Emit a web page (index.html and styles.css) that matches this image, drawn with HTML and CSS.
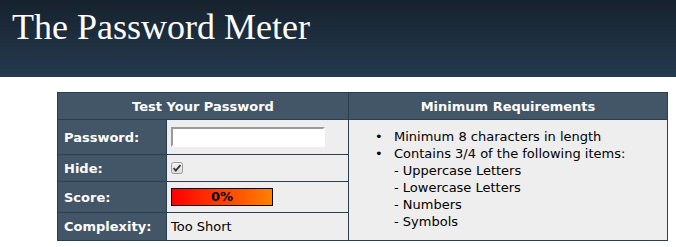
FILE: index.html
```html
<!DOCTYPE html>
<html>
<head>
<meta charset="utf-8">
<link rel="stylesheet" href="styles.css">
</head>
<body>
<div class="header">
  <h1 class="title">The Password Meter</h1>
</div>
<div class="main">
  <table class="meter">
    <colgroup>
      <col class="col-label">
      <col class="col-value">
      <col class="col-reqs">
    </colgroup>
    <tr class="row-head">
      <th class="head" colspan="2">Test Your Password</th>
      <th class="head">Minimum Requirements</th>
    </tr>
    <tr class="row-pass">
      <td class="label">Password:</td>
      <td class="value"><input class="pwd" type="password"></td>
      <td class="reqs" rowspan="4">
        <ul class="req-list">
          <li>Minimum 8 characters in length</li>
          <li>Contains 3/4 of the following items:
            <ul class="sub-list">
              <li>- Uppercase Letters</li>
              <li>- Lowercase Letters</li>
              <li>- Numbers</li>
              <li>- Symbols</li>
            </ul>
          </li>
        </ul>
      </td>
    </tr>
    <tr class="row-hide">
      <td class="label">Hide:</td>
      <td class="value"><svg class="check" width="12" height="12" viewBox="0 0 12 12"><defs><linearGradient id="cb" x1="0" y1="0" x2="0" y2="1"><stop offset="0" stop-color="#f4f4f4"/><stop offset="1" stop-color="#dcdcdc"/></linearGradient></defs><rect x="0.5" y="0.5" width="11" height="11" rx="2" fill="url(#cb)" stroke="#9a9a9a"/><path d="M2.6 6.2 L4.8 8.6 L9.4 3.2" fill="none" stroke="#333" stroke-width="1.8"/></svg></td>
    </tr>
    <tr class="row-score">
      <td class="label">Score:</td>
      <td class="value"><div class="bar">0%</div></td>
    </tr>
    <tr class="row-comp">
      <td class="label">Complexity:</td>
      <td class="value">Too Short</td>
    </tr>
  </table>
</div>
</body>
</html>
```
FILE: styles.css
```css
html, body {
  margin: 0;
  padding: 0;
  background: #ffffff;
}
body {
  font-family: "DejaVu Sans", Verdana, sans-serif;
  font-size: 13px;
  color: #000;
}
.header {
  height: 77px;
  background: linear-gradient(to bottom, #16212c 0%, #1d2d3d 45%, #253a4e 100%);
  overflow: hidden;
}
.title {
  margin: 0;
  padding: 7px 0 0 12px;
  font-family: "Liberation Serif", "Times New Roman", serif;
  font-weight: normal;
  font-size: 36px;
  line-height: 40px;
  color: #ffffff;
}
.main {
  padding: 15px 0 0 57px;
}
.meter {
  border-collapse: collapse;
  border: 1px solid #2c3e50;
  width: 610px;
  table-layout: fixed;
}
.col-label { width: 109px; }
.col-value { width: 182px; }
.col-reqs { width: 319px; }
.meter th, .meter td {
  border: 1px solid #2c3e50;
  padding: 0;
}
.head {
  background: #435668;
  color: #ffffff;
  font-weight: bold;
  text-align: center;
  height: 26px;
}
.label {
  background: #435668;
  color: #ffffff;
  font-weight: bold;
  padding-left: 6px !important;
}
.value {
  background: #eeeeee;
  padding-left: 4px !important;
}
.row-pass td.label, .row-pass td.value { height: 34px; }
.row-hide td { height: 26px; }
.row-score td { height: 30px; }
.row-comp td { height: 27px; }
.pwd {
  display: block;
  box-sizing: border-box;
  width: 154px;
  height: 20px;
  margin: 0;
  border: 2px solid #ffffff;
  border-top-color: #9a9a9a;
  border-left-color: #9a9a9a;
  background: #ffffff;
}
.check {
  display: block;
}
.bar {
  box-sizing: border-box;
  width: 102px;
  height: 18px;
  border: 1px solid #000;
  background: linear-gradient(to right, #ff0000, #ff8000);
  text-align: center;
  font-weight: bold;
  font-size: 13px;
  line-height: 16px;
}
.reqs {
  background: #eeeeee;
  vertical-align: top;
}
.req-list {
  list-style: none;
  margin: 8px 0 0 0;
  padding-left: 26px;
  line-height: 17px;
}
.req-list > li::before {
  content: "\2022";
  display: inline-block;
  vertical-align: top;
  width: 19px;
  height: 17px;
  line-height: 17px;
}
.sub-list {
  list-style: none;
  margin: 0;
  padding: 0 0 0 19px;
}
```
